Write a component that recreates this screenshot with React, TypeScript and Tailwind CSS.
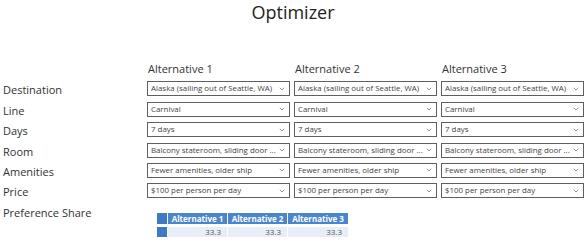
import React from 'react';

const alternatives = ['Alternative 1', 'Alternative 2', 'Alternative 3'];

const attributes = [
  { label: 'Destination', value: 'Alaska (sailing out of Seattle, WA)' },
  { label: 'Line', value: 'Carnival' },
  { label: 'Days', value: '7 days' },
  { label: 'Room', value: 'Balcony stateroom, sliding door ...' },
  { label: 'Amenities', value: 'Fewer amenities, older ship' },
  { label: 'Price', value: '$100 per person per day' },
];

const Chevron = () => (
  <svg width="6" height="4" viewBox="0 0 6 4" className="shrink-0" aria-hidden="true">
    <path d="M0.8 0.8 L3 3 L5.2 0.8" fill="none" stroke="#8a8a8a" strokeWidth="0.9" />
  </svg>
);

const SelectBox = ({ value }: { value: string }) => (
  <div className="h-[15px] border border-[#5f5f5f] flex items-center pl-[3px] pr-[4px] gap-[3px] bg-white">
    <span className="flex-1 whitespace-nowrap overflow-hidden text-[7.9px] leading-[13px] text-[#444]">{value}</span>
    <Chevron />
  </div>
);

export default function App() {
  return (
    <div className="w-[586px] h-[243px] bg-white font-['Open_Sans',sans-serif] text-[#333] overflow-hidden">
      <h1 className="text-center text-[18px] leading-[24px] text-[#222]">Optimizer</h1>

      <div className="mt-[37px] grid grid-cols-[143px_143px_143px_143px] gap-x-[4px] gap-y-[5.4px] items-center">
        <div />
        {alternatives.map((alt) => (
          <div key={alt} className="pl-[1px] text-[11px] leading-[15px] text-[#333]">
            {alt}
          </div>
        ))}

        {attributes.map((attr) => (
          <React.Fragment key={attr.label}>
            <div className="pl-[3px] text-[11px] leading-[15px] translate-y-[1px]">{attr.label}</div>
            {alternatives.map((alt) => (
              <SelectBox key={alt} value={attr.value} />
            ))}
          </React.Fragment>
        ))}

        <div className="self-start pl-[3px] text-[11px] leading-[15px] translate-y-[1px]">Preference Share</div>
        <div className="col-span-3 self-start pt-[9px] pl-[10px]">
          <div className="grid grid-cols-[10px_59px_59px_60px] gap-x-px gap-y-[3px] w-max text-[8px]">
            <div className="h-[11px] bg-[#3d79c6]" />
            {alternatives.map((alt) => (
              <div key={alt} className="h-[11px] bg-[#4a86cf] text-white font-bold leading-[11px] text-center">
                {alt}
              </div>
            ))}
            <div className="h-[10px] bg-[#3d79c6]" />
            {alternatives.map((alt) => (
              <div key={alt} className="h-[10px] bg-[#e8eef8] text-[#555] leading-[10px] text-right pr-[6px]">
                33.3
              </div>
            ))}
          </div>
        </div>
      </div>
    </div>
  );
}
